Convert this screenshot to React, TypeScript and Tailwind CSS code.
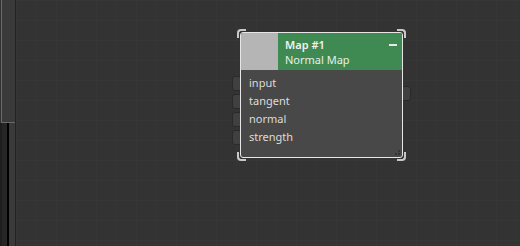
import React from 'react'

const INPUTS = ['input', 'tangent', 'normal', 'strength']

function Corner({ pos }: { pos: 'tl' | 'tr' | 'bl' | 'br' }) {
  const base = 'absolute w-[9px] h-[9px] border-[#c8c8c8]'
  const map = {
    tl: 'left-[-3px] top-[-3px] border-l-2 border-t-2 rounded-tl-[4px]',
    tr: 'right-[-3px] top-[-3px] border-r-2 border-t-2 rounded-tr-[4px]',
    bl: 'left-[-3px] bottom-[-3px] border-l-2 border-b-2 rounded-bl-[4px]',
    br: 'right-[-3px] bottom-[-3px] border-r-2 border-b-2 rounded-br-[4px]',
  }
  return <div className={`${base} ${map[pos]}`} />
}

export default function App() {
  return (
    <div
      className="relative w-[520px] h-[246px] overflow-hidden bg-[#323232] flex"
      style={{ fontFamily: '"Noto Sans", "DejaVu Sans", sans-serif' }}
    >
      {/* left sidebar strip */}
      <div className="flex flex-col w-[15px] h-full shrink-0">
        <div className="h-[123px] bg-[#3a3a3a] border-l border-b border-[#6a6a6a] ml-[1px]" />
        <div className="flex-1 flex">
          <div className="w-[2px] bg-[#1e1e1e]" />
          <div className="w-[5px] bg-[#262626]" />
          <div className="w-[2px] bg-black" />
          <div className="flex-1 bg-[#3a3a3a]" />
        </div>
      </div>
      <div className="w-[1px] h-full bg-[#222]" />

      {/* canvas with faint grid */}
      <div
        className="relative flex-1 h-full bg-[#333333]"
        style={{
          backgroundImage:
            'linear-gradient(to right, rgba(255,255,255,0.014) 1px, transparent 1px), linear-gradient(to bottom, rgba(255,255,255,0.014) 1px, transparent 1px)',
          backgroundSize: '20px 20px',
        }}
      >
        {/* node */}
        <div className="absolute left-[224px] top-[32px] w-[163px] h-[126px]">
          {/* ports */}
          {[0, 1, 2, 3].map(i => (
            <div
              key={i}
              className="absolute left-[-8px] w-[10px] h-[15px] rounded-[3px] bg-[#404040] border border-[#2a2a2a]"
              style={{ top: 44 + i * 18 }}
            />
          ))}
          <div className="absolute right-[-8px] top-[54px] w-[10px] h-[15px] rounded-[3px] bg-[#404040] border border-[#2a2a2a]" />

          <div className="relative w-full h-full border border-[#e6e6e6] rounded-[3px] bg-[#484848] flex flex-col overflow-hidden">
            <div className="flex h-[37px] bg-[#3f8a52]">
              <div className="w-[37px] h-full bg-[#b5b5b5]" />
              <div className="flex-1 flex flex-col pl-[7px] pt-[4px] leading-[15px]">
                <span className="text-[11px] font-semibold text-[#f2f2f2]">Map #1</span>
                <span className="text-[11px] text-[#e8efe8]">Normal Map</span>
              </div>
              <div className="w-[8px] h-[2px] bg-[#e8e8e8] mt-[11px] mr-[5px]" />
            </div>
            <div className="flex flex-col pt-[4px] pl-[8px]">
              {INPUTS.map(t => (
                <div key={t} className="h-[18px] flex items-center text-[11px] text-[#dcdcdc]">
                  {t}
                </div>
              ))}
            </div>
            {/* resize grip */}
            <div className="absolute right-[2px] bottom-[2px] grid grid-cols-2 gap-[1px]">
              <div className="w-[2px] h-[2px]" />
              <div className="w-[2px] h-[2px] bg-[#333]" />
              <div className="w-[2px] h-[2px] bg-[#333]" />
              <div className="w-[2px] h-[2px] bg-[#333]" />
            </div>
          </div>

          <Corner pos="tl" />
          <Corner pos="tr" />
          <Corner pos="bl" />
          <Corner pos="br" />
        </div>
      </div>
    </div>
  )
}
